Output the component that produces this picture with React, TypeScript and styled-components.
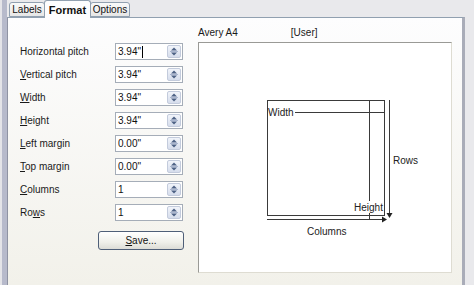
import React from 'react';
import styled, { createGlobalStyle } from 'styled-components';

const GlobalStyle = createGlobalStyle`
    html, body {
        margin: 0;
        padding: 0;
        background: #dcdce0;
    }
    body {
        font-family: "Liberation Sans", Arial, sans-serif;
        font-size: 10px;
        color: #1a1a1a;
    }
`

const fields = [
    { label: 'Horizontal pitch', key: '', rest: 'Horizontal pitch', value: '3.94"', caret: true },
    { label: 'Vertical pitch', key: 'V', rest: 'ertical pitch', value: '3.94"' },
    { label: 'Width', key: 'W', rest: 'idth', value: '3.94"' },
    { label: 'Height', key: 'H', rest: 'eight', value: '3.94"' },
    { label: 'Left margin', key: 'L', rest: 'eft margin', value: '0.00"' },
    { label: 'Top margin', key: 'T', rest: 'op margin', value: '0.00"' },
    { label: 'Columns', key: 'C', rest: 'olumns', value: '1' },
    { label: 'Rows', key: '', rest: 'Rows', value: '1' },
]

function Spinner() {
    return (
        <SpinBox>
            <svg width="12" height="13" viewBox="0 0 12 13">
                <path d="M3 5.5 L6 2.5 L9 5.5 Z" fill="#4d6185" />
                <line x1="2" y1="6.5" x2="10" y2="6.5" stroke="#aab6cf" />
                <path d="M3 7.5 L6 10.5 L9 7.5 Z" fill="#4d6185" />
            </svg>
        </SpinBox>
    )
}

function Diagram() {
    return (
        <svg width="252" height="229" viewBox="0 0 252 229">
            <g stroke="#3a3a3a" strokeWidth="1" fill="none" shapeRendering="crispEdges">
                <rect x="68.5" y="57.5" width="117" height="115" />
                <line x1="68" y1="69.5" x2="186" y2="69.5" />
                <line x1="170.5" y1="57" x2="170.5" y2="176" />
                <line x1="190.5" y1="57" x2="190.5" y2="171" />
                <line x1="68" y1="176.5" x2="184" y2="176.5" />
            </g>
            <path d="M187.5 170 L193.5 170 L190.5 175 Z" fill="#222" />
            <path d="M183 173.5 L188 176.5 L183 179.5 Z" fill="#222" />
            <rect x="69" y="64" width="27" height="11" fill="#fff" />
            <rect x="154" y="158" width="29" height="12" fill="#fff" />
            <g fontFamily="'Liberation Sans', Arial, sans-serif" fontSize="10" fill="#222">
                <text x="69" y="73">Width</text>
                <text x="155" y="168">Height</text>
                <text x="194" y="121">Rows</text>
                <text x="108" y="192">Columns</text>
            </g>
        </svg>
    )
}

export default function App() {
    return (
        <>
            <GlobalStyle />
            <Frame>
                <TabBar>
                    <Tab>Labels</Tab>
                    <Tab $active>Format</Tab>
                    <Tab>Options</Tab>
                </TabBar>
                <Panel>
                    <FormColumn>
                        <FieldGrid>
                            {fields.map((f) => (
                                <React.Fragment key={f.label}>
                                    <FieldLabel>
                                        {f.key ? <u>{f.key}</u> : null}
                                        {f.label === 'Rows' ? <>Ro<u>w</u>s</> : f.rest}
                                    </FieldLabel>
                                    <Field>
                                        <FieldText>
                                            {f.value}
                                            {f.caret ? <Caret /> : null}
                                        </FieldText>
                                        <Spinner />
                                    </Field>
                                </React.Fragment>
                            ))}
                        </FieldGrid>
                        <SaveButton><u>S</u>ave...</SaveButton>
                    </FormColumn>
                    <PreviewColumn>
                        <PreviewHeader>
                            <span>Avery A4</span>
                            <span>[User]</span>
                        </PreviewHeader>
                        <PreviewBox>
                            <Diagram />
                        </PreviewBox>
                    </PreviewColumn>
                </Panel>
            </Frame>
        </>
    )
}

const Frame = styled.div`
    width: 474px;
    height: 285px;
    overflow: hidden;
    display: flex;
    flex-direction: column;
    background: linear-gradient(to right, #e4e4e8 0, #e4e4e8 2px, #b7bacb 2px, #b7bacb 7px, #e9e9ec 7px);
`
const TabBar = styled.div`
    height: 17px;
    display: flex;
    align-items: flex-end;
    padding-left: 9px;
    position: relative;
    z-index: 1;
`
const Tab = styled.div<{ $active?: boolean }>`
    box-sizing: border-box;
    height: ${(p) => (p.$active ? '18px' : '15px')};
    margin-bottom: ${(p) => (p.$active ? '-1px' : '0')};
    padding: 0 3px;
    display: flex;
    align-items: center;
    border: 1px solid #91a0b0;
    border-bottom: ${(p) => (p.$active ? 'none' : '1px solid #91a0b0')};
    border-radius: 3px 3px 0 0;
    margin-left: ${(p) => (p.$active ? '-1px' : '0')};
    margin-right: ${(p) => (p.$active ? '-1px' : '0')};
    background: ${(p) => (p.$active ? '#fdfdfe' : 'linear-gradient(#fafafa, #e6e6e6)')};
    font-weight: ${(p) => (p.$active ? 'bold' : 'normal')};
    font-size: ${(p) => (p.$active ? '11px' : '10px')};
    color: #111;
    &:first-child { width: 36px; justify-content: center; }
    &:nth-child(2) { width: 47px; justify-content: center; }
    &:last-child { width: 40px; justify-content: center; }
`
const Panel = styled.div`
    flex: 1;
    margin-left: 7px;
    width: 458px;
    box-sizing: border-box;
    display: flex;
    gap: 14px;
    padding: 24px 12px 0 12px;
    border-left: 1px solid #8f93a3;
    border-top: 1px solid #91a0b0;
    border-right: 3px solid #a9acb8;
    background: linear-gradient(#fdfdfe, #f2f1ea);
`
const FormColumn = styled.div`
    width: 164px;
    padding-top: 1px;
    display: flex;
    flex-direction: column;
`
const FieldGrid = styled.div`
    display: grid;
    grid-template-columns: 95px 68px;
    grid-auto-rows: 17px;
    row-gap: 6px;
    align-items: center;
`
const FieldLabel = styled.div`
    font-size: 10px;
    color: #1a1a1a;
    white-space: nowrap;
`
const Field = styled.div`
    box-sizing: border-box;
    height: 17px;
    border: 1px solid #a5adb8;
    background: #fff;
    display: flex;
    align-items: center;
    justify-content: space-between;
    padding: 0 1px 0 2px;
`
const FieldText = styled.div`
    display: flex;
    align-items: center;
    font-size: 10px;
    color: #111;
`
const Caret = styled.span`
    display: inline-block;
    width: 1px;
    height: 12px;
    background: #000;
    margin-left: 1px;
`
const SpinBox = styled.div`
    box-sizing: border-box;
    width: 14px;
    height: 13px;
    display: flex;
    align-items: center;
    justify-content: center;
    border: 1px solid #c3cbdc;
    border-radius: 2px;
    background: linear-gradient(#f1f4fa, #d6ddec);
`
const SaveButton = styled.div`
    box-sizing: border-box;
    margin-top: 10px;
    margin-left: 78px;
    width: 86px;
    height: 19px;
    display: flex;
    align-items: center;
    justify-content: center;
    border: 1px solid #4f5f78;
    border-radius: 3px;
    background: linear-gradient(#ffffff, #f0f0ea 60%, #dcdcd6);
    font-size: 10px;
    color: #111;
`
const PreviewColumn = styled.div`
    width: 254px;
    margin-top: -18px;
    display: flex;
    flex-direction: column;
`
const PreviewHeader = styled.div`
    height: 16px;
    margin-bottom: 2px;
    display: flex;
    align-items: center;
    gap: 53px;
    font-size: 10px;
    color: #1a1a1a;
`
const PreviewBox = styled.div`
    box-sizing: border-box;
    width: 254px;
    height: 231px;
    background: #fff;
    border: 1px solid;
    border-color: #9a9a96 #dedcd2 #dedcd2 #9a9a96;
    display: flex;
`
